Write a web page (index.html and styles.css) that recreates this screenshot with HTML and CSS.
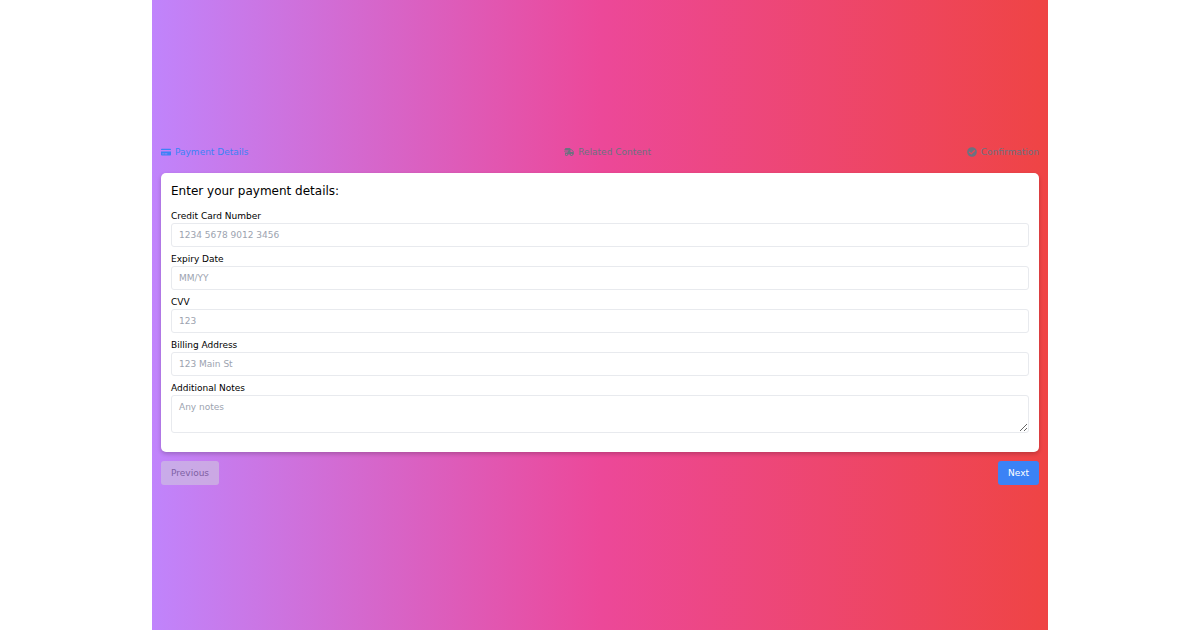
FILE: index.html
```html
<!DOCTYPE html>
<html lang="en">
<head>
  <meta charset="UTF-8" />
  <meta name="viewport" content="width=device-width, initial-scale=1.0" />
  <title>Payment Details</title>
  <link rel="stylesheet" href="styles.css">
</head>
<body>
  <main class="checkout">
    <ol class="steps">
      <li class="step active">
        <svg class="icon" viewBox="0 0 576 512" aria-hidden="true"><path d="M0 128c0-35 22-64 48-64h480c26 0 48 29 48 64v16H0zM0 220h576v196c0 26-22 48-48 48H48c-26 0-48-22-48-48zm72 126v46h92v-46zm128 0v46h160v-46z" fill-rule="evenodd"/></svg>
        <span>Payment Details</span>
      </li>
      <li class="step">
        <svg class="icon" viewBox="0 0 640 512" aria-hidden="true"><path d="M640 352h-16V244c0-13-5-25-14-34L494 94c-9-9-21-14-34-14h-44V48c0-27-21-48-48-48H112C85 0 64 21 64 48v48H8c-4 0-8 4-8 8v16c0 4 4 8 8 8h272c4 0 8 4 8 8v16c0 4-4 8-8 8H40c-4 0-8 4-8 8v16c0 4 4 8 8 8h208c4 0 8 4 8 8v16c0 4-4 8-8 8H8c-4 0-8 4-8 8v16c0 4 4 8 8 8h208c4 0 8 4 8 8v16c0 4-4 8-8 8H64v128c0 53 43 96 96 96s96-43 96-96h128c0 53 43 96 96 96s96-43 96-96h64zM160 464a48 48 0 110-96 48 48 0 010 96zm320 0a48 48 0 110-96 48 48 0 010 96zm80-208H416V128h44l100 100z" fill-rule="evenodd"/></svg>
        <span>Related Content</span>
      </li>
      <li class="step">
        <svg class="icon" viewBox="0 0 512 512" aria-hidden="true"><path d="M256 8a248 248 0 110 496 248 248 0 010-496zm-29 379l184-184c6-6 6-16 0-23l-23-22c-6-7-16-7-22 0L216 308l-70-70c-6-6-16-6-22 0l-23 23c-6 6-6 16 0 22l104 104c6 6 16 6 22 0z" fill-rule="evenodd"/></svg>
        <span>Confirmation</span>
      </li>
    </ol>

    <form id="paymentForm" class="card">
      <h2>Enter your payment details:</h2>
      <div class="form-group">
        <label for="cardNumber">Credit Card Number</label>
        <input type="text" id="cardNumber" placeholder="1234 5678 9012 3456" />
      </div>
      <div class="form-group">
        <label for="expiry">Expiry Date</label>
        <input type="text" id="expiry" placeholder="MM/YY" />
      </div>
      <div class="form-group">
        <label for="cvv">CVV</label>
        <input type="text" id="cvv" placeholder="123" />
      </div>
      <div class="form-group">
        <label for="address">Billing Address</label>
        <input type="text" id="address" placeholder="123 Main St" />
      </div>
      <div class="form-group">
        <label for="notes">Additional Notes</label>
        <textarea id="notes" rows="2" placeholder="Any notes"></textarea>
      </div>
    </form>

    <div class="actions">
      <button type="button" class="btn previous" disabled>Previous</button>
      <button type="submit" form="paymentForm" class="btn next">Next</button>
    </div>
  </main>
</body>
</html>
```
FILE: styles.css
```css
:root {
  --blue: #3b82f6;
  --gray: #6b7280;
  --placeholder: #9ca3af;
  --border: #e8eaee;
}

* {
  box-sizing: border-box;
}

body {
  margin: 0;
  background: white;
  color: black;
  font-family: "DejaVu Sans", sans-serif;
  font-size: 9px;
  line-height: 14px;
}

.checkout {
  display: flex;
  flex-direction: column;
  justify-content: center;
  max-width: 896px;
  min-height: 100vh;
  margin: 0 auto;
  padding: 9px;
  background: linear-gradient(to right, #c084fc, #ec4899, #ef4444);
}

.steps {
  display: flex;
  justify-content: space-between;
  margin: 0 0 14px;
  padding: 0;
  list-style: none;
}

.step {
  display: flex;
  align-items: center;
  gap: 4px;
  color: var(--gray);
}

.step.active {
  color: var(--blue);
}

.icon {
  width: 10px;
  height: 10px;
  fill: currentColor;
}

.card {
  padding: 10px 10px 19px;
  background: white;
  border-radius: 5px;
  box-shadow: 0 2px 4px rgba(0, 0, 0, 0.2);
}

h2 {
  margin: 0 0 10px;
  font-size: 12px;
  font-weight: 400;
  line-height: 16px;
}

.form-group {
  display: flex;
  flex-direction: column;
}

.form-group + .form-group {
  margin-top: 5px;
}

input,
textarea {
  display: block;
  width: 100%;
  padding: 4px 7px;
  border: 1px solid var(--border);
  border-radius: 3px;
  background: white;
  color: inherit;
  font: inherit;
}

textarea {
  resize: vertical;
}

input::placeholder,
textarea::placeholder {
  color: var(--placeholder);
  opacity: 1;
}

.actions {
  display: flex;
  justify-content: space-between;
  margin-top: 9px;
}

.btn {
  padding: 5px 10px;
  border: 0;
  border-radius: 3px;
  font: inherit;
  cursor: pointer;
}

.previous {
  background: #d1d5db;
  color: #374151;
}

.previous:disabled {
  opacity: 0.5;
  cursor: not-allowed;
}

.next {
  background: var(--blue);
  color: white;
}
```
